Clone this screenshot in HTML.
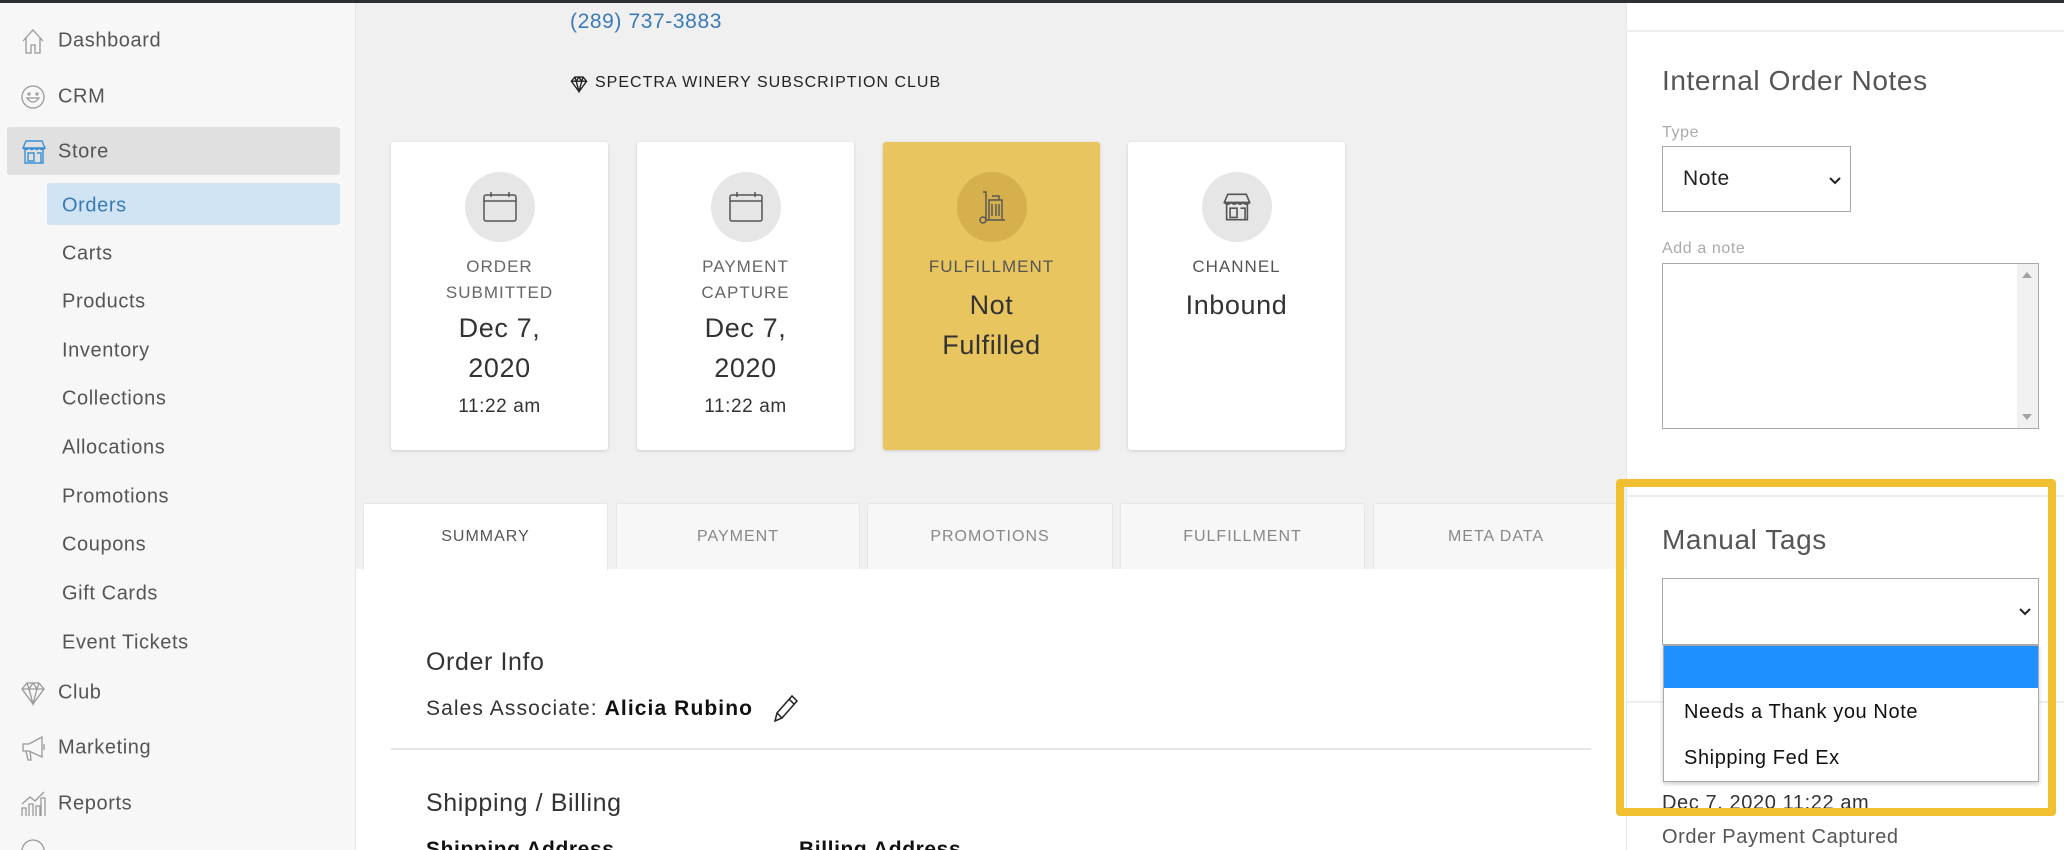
<!DOCTYPE html>
<html style="overflow:hidden;width:2064px;height:850px"><head><meta charset="utf-8"><style>
*{box-sizing:border-box;margin:0;padding:0}
body{width:2064px;height:850px;overflow:hidden;position:relative;font-family:"Liberation Sans",sans-serif;background:#f0f0f0;color:#333;letter-spacing:0.6px}
.a{position:absolute;white-space:nowrap}
#top{left:0;top:0;width:2064px;height:3px;background:#2b3036}
#side{left:0;top:3px;width:356px;height:847px;background:#f7f7f7;border-right:1px solid #e4e4e4}
.nav{font-size:20px;color:#555;transform:translateY(-50%)}
.ic{position:absolute;transform:translateY(-50%)}
.card{position:absolute;top:142px;width:217px;height:308px;background:#fff;border-radius:3px;box-shadow:0 1px 3px rgba(0,0,0,.15);text-align:center}
.circ{position:absolute;left:74px;top:30px;width:70px;height:70px;border-radius:50%;background:#e6e6e6}
.lbl{position:absolute;left:0;width:100%;top:112px;font-size:17px;color:#666;letter-spacing:1px;line-height:26px}
.big{position:absolute;left:0;width:100%;font-size:27px;color:#333;line-height:40px}
.tab{position:absolute;top:503px;height:66px;background:#f7f7f7;border:1px solid #e6e6e6;border-bottom:none;border-radius:3px 3px 0 0;font-size:16px;color:#888;text-align:center;line-height:66px;letter-spacing:1px}
</style></head><body>
<div class="a" id="top"></div>
<div class="a" id="side"></div>
<div class="a" style="left:7px;top:127px;width:333px;height:48px;background:#e0e0e0;border-radius:3px"></div>
<div class="a" style="left:47px;top:183px;width:293px;height:42px;background:#d0e4f4;border-radius:3px"></div>
<svg class="ic" style="left:20px;top:41px" width="26" height="28" viewBox="0 0 26 28" fill="none" stroke="#999" stroke-width="1.3"><path d="M3 14 L13 3 L23 14 M6 11 V26 H11 V18 H15 V26 H20 V11"/></svg>
<svg class="ic" style="left:20px;top:97px" width="26" height="26" viewBox="0 0 26 26" fill="none" stroke="#999" stroke-width="1.3"><circle cx="13" cy="13" r="11"/><circle cx="9" cy="10" r="1"/><circle cx="17" cy="10" r="1"/><path d="M7 14 H19 Q13 22 7 14Z"/></svg>
<svg class="ic" style="left:21px;top:152px" width="26" height="26" viewBox="0 0 26 26" fill="none" stroke="#3a8fd6" stroke-width="1.4"><path d="M2 9 L5 2 H21 L24 9 Z M2 9 Q5 12 8 9 Q11 12 13 9 Q16 12 18 9 Q21 12 24 9 M4 11 V24 H22 V11 M7 14 H13 V22 H7Z M16 14 H20 V24"/></svg>
<div class="a nav" style="left:58px;top:41px">Dashboard</div>
<div class="a nav" style="left:58px;top:97px">CRM</div>
<div class="a nav" style="left:58px;top:152px">Store</div>
<div class="a nav" style="left:62px;top:206px;color:#3a7ab8">Orders</div>
<div class="a nav" style="left:62px;top:254px">Carts</div>
<div class="a nav" style="left:62px;top:302px">Products</div>
<div class="a nav" style="left:62px;top:351px">Inventory</div>
<div class="a nav" style="left:62px;top:399px">Collections</div>
<div class="a nav" style="left:62px;top:448px">Allocations</div>
<div class="a nav" style="left:62px;top:497px">Promotions</div>
<div class="a nav" style="left:62px;top:545px">Coupons</div>
<div class="a nav" style="left:62px;top:594px">Gift Cards</div>
<div class="a nav" style="left:62px;top:643px">Event Tickets</div>
<svg class="ic" style="left:20px;top:693px" width="26" height="26" viewBox="0 0 26 26" fill="none" stroke="#999" stroke-width="1.3"><path d="M2 9 L7 3 H19 L24 9 L13 24 Z M2 9 H24 M9 9 L13 24 L17 9 M7 3 L9 9 L13 3 L17 9 L19 3"/></svg>
<div class="a nav" style="left:58px;top:693px">Club</div>
<svg class="ic" style="left:20px;top:748px" width="28" height="28" viewBox="0 0 28 28" fill="none" stroke="#999" stroke-width="1.3"><path d="M3 10 H9 L22 3 V23 L9 17 H3 Z M6 17 L8 26 H11 L10 17 M24 10 V16"/></svg>
<div class="a nav" style="left:58px;top:748px">Marketing</div>
<svg class="ic" style="left:20px;top:804px" width="26" height="28" viewBox="0 0 26 28" fill="none" stroke="#999" stroke-width="1.3"><path d="M2 26 V18 H6 V26 M9 26 V14 H13 V26 M16 26 V16 H20 V26 M21 26 V8 H25 V26 M2 14 L10 7 L15 11 L24 2"/></svg>
<div class="a nav" style="left:58px;top:804px">Reports</div>
<div class="a" style="left:20px;top:838px;width:26px;height:12px;overflow:hidden"><svg width="26" height="26" viewBox="0 0 26 26" fill="none" stroke="#999" stroke-width="1.3"><circle cx="13" cy="13" r="11"/></svg></div>

<div class="a" style="left:570px;top:10px;font-size:21px;color:#3a7ab8">(289) 737-3883</div>
<svg class="a" style="left:570px;top:75px" width="18" height="18" viewBox="0 0 26 26" fill="none" stroke="#222" stroke-width="2"><path d="M2 9 L7 3 H19 L24 9 L13 24 Z M2 9 H24 M9 9 L13 24 L17 9 M7 3 L9 9 L13 3 L17 9 L19 3"/></svg>
<div class="a" style="left:595px;top:74px;font-size:16px;color:#222;letter-spacing:1px">SPECTRA WINERY SUBSCRIPTION CLUB</div>

<div class="card" style="left:391px"><div class="circ"></div>
<svg class="a" style="left:92px;top:50px" width="34" height="30" viewBox="0 0 34 30" fill="none" stroke="#555" stroke-width="1.5"><rect x="1" y="3" width="32" height="26" rx="2"/><path d="M1 9 H33 M8 0 V5 M26 0 V5"/></svg>
<div class="lbl">ORDER<br>SUBMITTED</div><div class="big" style="top:166px">Dec 7,<br>2020</div><div class="a" style="left:0;width:100%;top:254px;font-size:19px;color:#333">11:22 am</div></div>
<div class="card" style="left:637px"><div class="circ"></div>
<svg class="a" style="left:92px;top:50px" width="34" height="30" viewBox="0 0 34 30" fill="none" stroke="#555" stroke-width="1.5"><rect x="1" y="3" width="32" height="26" rx="2"/><path d="M1 9 H33 M8 0 V5 M26 0 V5"/></svg>
<div class="lbl">PAYMENT<br>CAPTURE</div><div class="big" style="top:166px">Dec 7,<br>2020</div><div class="a" style="left:0;width:100%;top:254px;font-size:19px;color:#333">11:22 am</div></div>
<div class="card" style="left:883px;background:#e8c55e"><div class="circ" style="background:#d6b04c"></div>
<svg class="a" style="left:94px;top:48px" width="30" height="34" viewBox="0 0 30 34" fill="none" stroke="#555" stroke-width="1.4"><path d="M6 2 H9 V30 M9 30 H28 M12 10 H25 V30 H12 Z M15 6 H22 V10 M15 14 V26 M19 14 V26 M22 14 V26"/><circle cx="6" cy="30" r="3"/></svg>
<div class="lbl" style="top:112px;color:#555">FULFILLMENT</div><div class="big" style="top:143px">Not<br>Fulfilled</div></div>
<div class="card" style="left:1128px"><div class="circ"></div>
<svg class="a" style="left:94px;top:50px" width="30" height="30" viewBox="0 0 26 26" fill="none" stroke="#555" stroke-width="1.4"><path d="M2 9 L5 2 H21 L24 9 Z M2 9 Q5 12 8 9 Q11 12 13 9 Q16 12 18 9 Q21 12 24 9 M4 11 V24 H22 V11 M7 14 H13 V22 H7Z M16 14 H20 V24"/></svg>
<div class="lbl" style="top:112px;color:#555">CHANNEL</div><div class="big" style="top:143px">Inbound</div></div>

<div class="a" style="left:356px;top:569px;width:1270px;height:281px;background:#fff"></div>
<div class="tab" style="left:363px;width:245px;background:#fff;color:#555;height:67px">SUMMARY</div>
<div class="tab" style="left:616px;width:244px">PAYMENT</div>
<div class="tab" style="left:867px;width:246px">PROMOTIONS</div>
<div class="tab" style="left:1120px;width:245px">FULFILLMENT</div>
<div class="tab" style="left:1373px;width:246px">META DATA</div>

<div class="a" style="left:426px;top:648px;font-size:25px;color:#333">Order Info</div>
<div class="a" style="left:426px;top:697px;font-size:21px;color:#333;letter-spacing:1.1px">Sales Associate: <b style="color:#111">Alicia Rubino</b></div>
<svg class="a" style="left:771px;top:693px" width="28" height="30" viewBox="0 0 28 30" fill="none" stroke="#222" stroke-width="1.5"><path d="M4 28 L6 20 L21 3 L26 8 L11 25 Z M6 20 L11 25 M18 6 L23 11"/></svg>
<div class="a" style="left:391px;top:748px;width:1200px;height:2px;background:#e6e6e6"></div>
<div class="a" style="left:426px;top:789px;font-size:25px;color:#333">Shipping / Billing</div>
<div class="a" style="left:426px;top:838px;font-size:21px;font-weight:bold;color:#111">Shipping Address</div>
<div class="a" style="left:799px;top:838px;font-size:21px;font-weight:bold;color:#111">Billing Address</div>

<div class="a" style="left:1626px;top:3px;width:438px;height:847px;background:#fff;border-left:1px solid #e8e8e8"></div>
<div class="a" style="left:1626px;top:30px;width:438px;height:2px;background:#eee"></div>
<div class="a" style="left:1662px;top:65px;font-size:28px;color:#555">Internal Order Notes</div>
<div class="a" style="left:1662px;top:124px;font-size:16px;color:#aaa">Type</div>
<div class="a" style="left:1662px;top:146px;width:189px;height:66px;border:1px solid #aaa;font-size:21px;color:#222;padding:20px 0 0 20px">Note</div>
<svg class="a" style="left:1829px;top:176px" width="12" height="9" viewBox="0 0 12 9" fill="none" stroke="#222" stroke-width="2"><path d="M1 2 L6 7 L11 2"/></svg>
<div class="a" style="left:1662px;top:240px;font-size:16px;color:#aaa">Add a note</div>
<div class="a" style="left:1662px;top:263px;width:377px;height:166px;border:1px solid #aaa"></div>
<div class="a" style="left:2017px;top:264px;width:21px;height:164px;background:#f1f1f1"></div>
<div class="a" style="left:2022px;top:272px;border:5px solid transparent;border-bottom:6px solid #a3a3a3;border-top:none"></div>
<div class="a" style="left:2022px;top:414px;border:5px solid transparent;border-top:6px solid #a3a3a3;border-bottom:none"></div>

<div class="a" style="left:1626px;top:495px;width:438px;height:2px;background:#eee"></div>
<div class="a" style="left:1662px;top:524px;font-size:28px;color:#555">Manual Tags</div>
<div class="a" style="left:1662px;top:578px;width:377px;height:67px;border:1px solid #aaa"></div>
<svg class="a" style="left:2019px;top:607px" width="12" height="9" viewBox="0 0 12 9" fill="none" stroke="#222" stroke-width="2"><path d="M1 2 L6 7 L11 2"/></svg>
<div class="a" style="left:1626px;top:701px;width:438px;height:2px;background:#eee"></div>
<div class="a" style="left:1662px;top:792px;font-size:20px;color:#333">Dec 7, 2020 11:22 am</div>
<div class="a" style="left:1662px;top:826px;font-size:20px;color:#555">Order Payment Captured</div>
<div class="a" style="left:1663px;top:645px;width:376px;height:137px;background:#fff;border:1px solid #aaa;box-shadow:0 2px 4px rgba(0,0,0,.2)">
<div style="height:42px;background:#1e90ff"></div>
<div style="font-size:20px;color:#111;padding-left:20px;height:46px;line-height:46px;margin-top:1px">Needs a Thank you Note</div>
<div style="font-size:20px;color:#111;padding-left:20px;height:46px;line-height:46px">Shipping Fed Ex</div></div>
<div class="a" style="left:1616px;top:479px;width:440px;height:337px;border:8px solid #f0c030;border-radius:4px"></div>
</body></html>
